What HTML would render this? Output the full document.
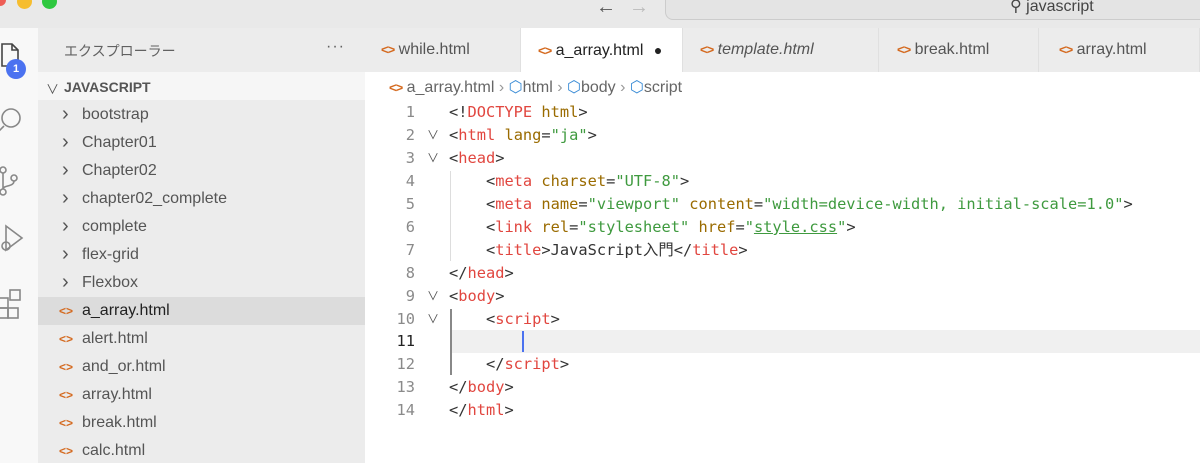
<!DOCTYPE html>
<html><head><meta charset="utf-8"><style>
*{margin:0;padding:0;box-sizing:border-box}
body{width:1200px;height:463px;overflow:hidden;background:#fff;font-family:"Liberation Sans","Noto Sans CJK JP",sans-serif;position:relative}
.abs{position:absolute}
#title{left:0;top:0;width:1200px;height:28px;background:#e9e9e9}
#act{left:0;top:28px;width:38px;height:435px;background:#f8f8f8}
#side{left:38px;top:28px;width:327px;height:435px;background:#ececec}
#sidehead{left:38px;top:28px;width:327px;height:44px;background:#ececec;color:#616161;font-size:14px}
#tabs{left:365px;top:28px;width:835px;height:44px;background:#ececec}
.tab{position:absolute;top:28px;height:44px;font-size:16px;color:#555;line-height:44px;border-right:1px solid #e0e0e0}
.ic{color:#d4691e;font-size:13px;font-weight:bold;letter-spacing:-1px}
.row{position:absolute;left:38px;width:327px;height:28px;line-height:28px;font-size:16px;color:#555}
.row .c{position:absolute;left:24px;top:-1px;color:#555;font-size:20px}
.row .t{position:absolute;left:44px}
.row .i{position:absolute;left:21px;color:#d4691e;font-size:12px;font-weight:bold}
.code{position:absolute;left:449px;font-family:"DejaVu Sans Mono",monospace;font-size:15.35px;color:#333;white-space:pre;height:23px;line-height:23px}
.ln{position:absolute;left:385px;width:30px;text-align:right;font-family:"DejaVu Sans Mono",monospace;font-size:15.35px;color:#8a8a8a;line-height:23px}
.fold{position:absolute;left:427px;font-size:12px;color:#555;line-height:23px}
.r{color:#e1463f}.y{color:#9a6b00}.g{color:#3f9a3f}
</style></head><body>
<div id="title" class="abs"></div>
<div class="abs" style="left:-6px;top:-6px;width:12px;height:12px;border-radius:50%;background:#ee5e56"></div>
<div class="abs" style="left:17px;top:-6px;width:15px;height:15px;border-radius:50%;background:#f6bd2f"></div>
<div class="abs" style="left:42px;top:-6px;width:15px;height:15px;border-radius:50%;background:#2fc840"></div>
<div class="abs" style="left:596px;top:-4px;font-size:20px;color:#555">←</div>
<div class="abs" style="left:629px;top:-4px;font-size:20px;color:#bbb">→</div>
<div class="abs" style="left:665px;top:-10px;width:560px;height:30px;border:1px solid #ccc;border-radius:8px;background:#e4e4e4"></div>
<div class="abs" style="left:1010px;top:-4px;font-size:16px;color:#444">⚲ javascript</div>
<div id="act" class="abs"></div>
<svg class="abs" style="left:0;top:40px" width="38" height="290" fill="none" stroke="#444" stroke-width="1.6">
<path d="M2 4h10l6 6v16H2z"/><path d="M12 4v6h6"/>
<circle cx="11" cy="78" r="9" stroke="#888"/><path d="M4 86l-5 5" stroke="#888"/>
<g stroke="#888"><circle cx="3" cy="130" r="3"/><circle cx="14" cy="138" r="3"/><circle cx="3" cy="152" r="3"/><path d="M3 133v16M14 141c0 6-11 4-11 8"/></g>
<g stroke="#888"><path d="M6 186l16 12-16 12z"/><circle cx="6" cy="206" r="4"/></g>
<g stroke="#888"><rect x="-2" y="258" width="10" height="10"/><rect x="-2" y="268" width="10" height="10"/><rect x="8" y="268" width="10" height="10"/><rect x="10" y="250" width="10" height="10"/></g>
</svg>
<div class="abs" style="left:6px;top:59px;width:20px;height:20px;border-radius:50%;background:#4b72f0;color:#fff;font-size:11px;font-weight:bold;text-align:center;line-height:20px">1</div>
<div id="side" class="abs"></div>
<div id="sidehead" class="abs"><span class="abs" style="left:26px;top:13px;font-size:14px">エクスプローラー</span><span class="abs" style="left:288px;top:10px;font-size:16px;letter-spacing:1px">···</span></div>
<div class="abs" style="left:38px;top:72px;width:327px;height:28px;background:#f6f6f6"></div>
<div class="abs" style="left:46px;top:79px;font-size:13px;color:#555">∨</div>
<div class="abs" style="left:64px;top:79px;font-size:14px;font-weight:bold;color:#555">JAVASCRIPT</div>
<div class="row" style="top:101px"><span class="c">›</span><span class="t">bootstrap</span></div>
<div class="row" style="top:129px"><span class="c">›</span><span class="t">Chapter01</span></div>
<div class="row" style="top:157px"><span class="c">›</span><span class="t">Chapter02</span></div>
<div class="row" style="top:185px"><span class="c">›</span><span class="t">chapter02_complete</span></div>
<div class="row" style="top:213px"><span class="c">›</span><span class="t">complete</span></div>
<div class="row" style="top:241px"><span class="c">›</span><span class="t">flex-grid</span></div>
<div class="row" style="top:269px"><span class="c">›</span><span class="t">Flexbox</span></div>
<div class="row" style="top:297px;background:#dcdcdc;color:#222"><span class="i">&lt;&gt;</span><span class="t">a_array.html</span></div>
<div class="row" style="top:325px"><span class="i">&lt;&gt;</span><span class="t">alert.html</span></div>
<div class="row" style="top:353px"><span class="i">&lt;&gt;</span><span class="t">and_or.html</span></div>
<div class="row" style="top:381px"><span class="i">&lt;&gt;</span><span class="t">array.html</span></div>
<div class="row" style="top:409px"><span class="i">&lt;&gt;</span><span class="t">break.html</span></div>
<div class="row" style="top:437px"><span class="i">&lt;&gt;</span><span class="t">calc.html</span></div>
<div id="tabs" class="abs"></div>
<div class="tab" style="left:365px;width:156px"><span class="ic" style="margin-left:16px">&lt;&gt;</span> while.html</div>
<div class="tab" style="left:521px;width:162px;background:#fff;color:#222"><span class="ic" style="margin-left:17px">&lt;&gt;</span> a_array.html <span style="margin-left:6px;font-size:14px">●</span></div>
<div class="tab" style="left:683px;width:196px;font-style:italic"><span class="ic" style="margin-left:17px;font-style:normal">&lt;&gt;</span> template.html</div>
<div class="tab" style="left:879px;width:160px"><span class="ic" style="margin-left:18px">&lt;&gt;</span> break.html</div>
<div class="tab" style="left:1039px;width:161px"><span class="ic" style="margin-left:20px">&lt;&gt;</span> array.html</div>
<div class="abs" style="left:389px;top:77px;font-size:16px;color:#666;white-space:pre"><span class="ic">&lt;&gt;</span> a_array.html <span style="color:#999">›</span> <span style="color:#3c8dd6">⬡</span>html <span style="color:#999">›</span> <span style="color:#3c8dd6">⬡</span>body <span style="color:#999">›</span> <span style="color:#3c8dd6">⬡</span>script</div>
<div class="abs" style="left:450px;top:330px;width:750px;height:23px;background:#f0f0f0"></div>
<div class="abs" style="left:450px;top:171px;width:1px;height:90px;background:#ddd"></div>
<div class="abs" style="left:450px;top:309px;width:2px;height:66px;background:#888"></div>
<div class="abs" style="left:522px;top:331px;width:2px;height:21px;background:#4b72f0"></div>
<div class="ln" style="top:101px">1</div><div class="ln" style="top:124px">2</div><div class="ln" style="top:147px">3</div><div class="ln" style="top:170px">4</div><div class="ln" style="top:193px">5</div><div class="ln" style="top:216px">6</div><div class="ln" style="top:239px">7</div><div class="ln" style="top:262px">8</div><div class="ln" style="top:285px">9</div><div class="ln" style="top:308px">10</div><div class="ln" style="top:330px;color:#222">11</div><div class="ln" style="top:353px">12</div><div class="ln" style="top:376px">13</div><div class="ln" style="top:399px">14</div>
<div class="fold" style="top:124px">∨</div><div class="fold" style="top:147px">∨</div><div class="fold" style="top:285px">∨</div><div class="fold" style="top:308px">∨</div>
<div class="code" style="top:101px">&lt;!<span class="r">DOCTYPE</span> <span class="y">html</span>&gt;</div>
<div class="code" style="top:124px">&lt;<span class="r">html</span> <span class="y">lang</span>=<span class="g">"ja"</span>&gt;</div>
<div class="code" style="top:147px">&lt;<span class="r">head</span>&gt;</div>
<div class="code" style="top:170px">    &lt;<span class="r">meta</span> <span class="y">charset</span>=<span class="g">"UTF-8"</span>&gt;</div>
<div class="code" style="top:193px">    &lt;<span class="r">meta</span> <span class="y">name</span>=<span class="g">"viewport"</span> <span class="y">content</span>=<span class="g">"width=device-width, initial-scale=1.0"</span>&gt;</div>
<div class="code" style="top:216px">    &lt;<span class="r">link</span> <span class="y">rel</span>=<span class="g">"stylesheet"</span> <span class="y">href</span>=<span class="g">"<u>style.css</u>"</span>&gt;</div>
<div class="code" style="top:239px">    &lt;<span class="r">title</span>&gt;JavaScript入門&lt;/<span class="r">title</span>&gt;</div>
<div class="code" style="top:262px">&lt;/<span class="r">head</span>&gt;</div>
<div class="code" style="top:285px">&lt;<span class="r">body</span>&gt;</div>
<div class="code" style="top:308px">    &lt;<span class="r">script</span>&gt;</div>
<div class="code" style="top:353px">    &lt;/<span class="r">script</span>&gt;</div>
<div class="code" style="top:376px">&lt;/<span class="r">body</span>&gt;</div>
<div class="code" style="top:399px">&lt;/<span class="r">html</span>&gt;</div>
</body></html>
